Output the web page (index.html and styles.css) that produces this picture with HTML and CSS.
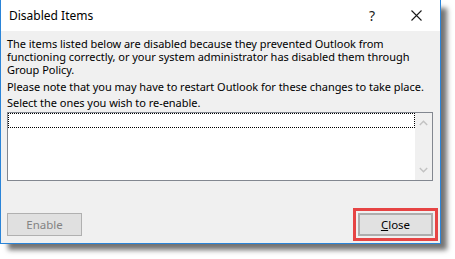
FILE: index.html
```html
<!DOCTYPE html>
<html>
<head>
<meta charset="utf-8">
<link rel="stylesheet" href="styles.css">
</head>
<body>
<div class="window">
  <div class="titlebar">
    <span class="title">Disabled Items</span>
    <span class="help">?</span>
    <span class="close-x">
      <svg width="11" height="11" viewBox="0 0 11 11"><path d="M0.5 0.5 L10.5 10.5 M10.5 0.5 L0.5 10.5" stroke="#1a1a1a" stroke-width="1.1" fill="none"/></svg>
    </span>
  </div>
  <div class="content">
    <p class="para first">The items listed below are disabled because they prevented Outlook from<br>functioning correctly, or your system administrator has disabled them through<br>Group Policy.</p>
    <p class="para">Please note that you may have to restart Outlook for these changes to take place.</p>
    <p class="para">Select the ones you wish to re-enable.</p>
    <div class="listbox">
      <div class="list-area"><div class="focus-row"></div></div>
      <div class="scrollbar">
        <svg class="arrow" width="9" height="6" viewBox="0 0 9 6"><path d="M0.8 5 L4.5 1.3 L8.2 5" stroke="#c2c2c2" stroke-width="1.4" fill="none"/></svg>
        <svg class="arrow" width="9" height="6" viewBox="0 0 9 6"><path d="M0.8 1 L4.5 4.7 L8.2 1" stroke="#c2c2c2" stroke-width="1.4" fill="none"/></svg>
      </div>
    </div>
    <div class="buttons">
      <button class="btn disabled" disabled>Enable</button>
      <span class="highlight"><button class="btn default"><u>C</u>lose</button></span>
    </div>
  </div>
</div>
</body>
</html>
```

FILE: styles.css
```css
html, body {
  margin: 0;
  padding: 0;
  background: #ffffff;
}
body {
  width: 455px;
  height: 259px;
  overflow: hidden;
  font-family: "Noto Sans", "Open Sans", sans-serif;
  font-size: 11px;
  letter-spacing: -0.04px;
  color: #000;
}
.window {
  width: 439px;
  height: 243px;
  border-left: 1px solid #2a84d8;
  border-right: 1px solid #2a84d8;
  border-bottom: 1px solid #2a84d8;
  background: #f0f0f0;
  box-shadow: 7px 7px 5px -1px rgba(0, 0, 0, 0.55);
  display: flex;
  flex-direction: column;
}
.titlebar {
  height: 31px;
  background: #ffffff;
  display: flex;
  align-items: center;
  padding-left: 8px;
  flex-shrink: 0;
}
.title {
  font-size: 12px;
  letter-spacing: 0;
  flex: 1;
  padding-bottom: 1px;
}
.help {
  font-size: 14px;
  width: 10px;
  margin-right: 32px;
  padding-bottom: 1px;
  color: #1a1a1a;
}
.close-x {
  width: 11px;
  height: 11px;
  margin-right: 18px;
  display: flex;
  margin-bottom: 1px;
}
.content {
  flex: 1;
  padding: 6px 7px 2px 6px;
  display: flex;
  flex-direction: column;
}
.para {
  margin: 0 0 3px 0;
  line-height: 13px;
  white-space: nowrap;
}
.para.first {
  margin-bottom: 4px;
}
.listbox {
  height: 67px;
  border: 1px solid #828790;
  background: #fff;
  display: flex;
}
.list-area {
  flex: 1;
}
.focus-row {
  height: 13px;
  border: 1px dotted #000;
}
.scrollbar {
  width: 17px;
  background: #f0f0f0;
  display: flex;
  flex-direction: column;
  justify-content: space-between;
  align-items: center;
  padding: 7px 0 7px 0;
}
.arrow {
  display: block;
}
.buttons {
  margin-top: auto;
  display: flex;
  justify-content: space-between;
  align-items: center;
}
.btn {
  width: 75px;
  height: 23px;
  font-family: "Noto Sans", "Open Sans", sans-serif;
  font-size: 11.5px;
  background: #e1e1e1;
  border: 1px solid #adadad;
  padding: 0;
  color: #000;
  border-radius: 0;
}
.btn.disabled {
  background: #e0e0e0;
  border-color: #b0b0b0;
  color: #838383;
}
.btn.default {
  border: 2px solid #adadad;
}
.highlight {
  display: flex;
  border: 3px solid #e64444;
  padding: 2px;
  margin-right: -5px;
}
```
